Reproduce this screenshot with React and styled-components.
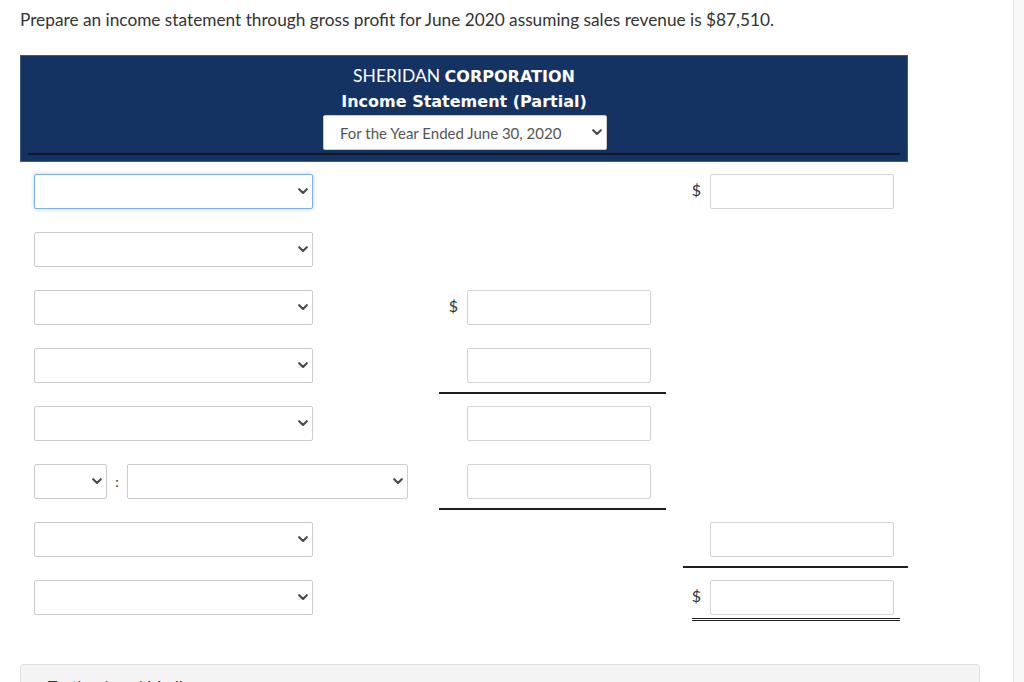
import React from "react";
import styled, { createGlobalStyle } from "styled-components";

const GlobalStyle = createGlobalStyle`
  html, body {
    margin: 0;
    padding: 0;
    background: #ffffff;
  }
  body {
    font-family: Lato, "Open Sans", "Liberation Sans", sans-serif;
    color: #333333;
  }
`;

const Chevron = () => (
  <ChevronIcon viewBox="0 0 10 7" width="10" height="7" aria-hidden="true">
    <path d="M1.2 1.2 L5 5 L8.8 1.2" fill="none" stroke="#4a4a4a" strokeWidth="2.1" strokeLinecap="round" strokeLinejoin="round" />
  </ChevronIcon>
);

const Dropdown = ({ width, focused, large, children }) => (
  <SelectWrap $width={width}>
    <NativeSelect $focused={focused} $large={large} defaultValue="">
      <option value="">{children}</option>
    </NativeSelect>
    <Chevron />
  </SelectWrap>
);

const Amount = ({ dollar }) => (
  <Field>
    {dollar && <Dollar>$</Dollar>}
    <AmountInput type="text" />
  </Field>
);

const rows = [
  { left: "select", focused: true, right: { dollar: true } },
  { left: "select" },
  { left: "select", mid: { dollar: true } },
  { left: "select", mid: {}, midRule: true },
  { left: "select", mid: {} },
  { left: "ratio", mid: {}, midRule: true },
  { left: "select", right: {}, rightRule: true },
  { left: "select", right: { dollar: true }, rightDouble: true },
];

const App = () => {
  return (
    <>
      <GlobalStyle />
      <Page>
        <Main>
          <Prompt>
            Prepare an income statement through gross profit for June 2020 assuming sales revenue is $87,510.
          </Prompt>
          <Sheet>
            <Header>
              <HeaderLine>
                SHERIDAN <Strong>CORPORATION</Strong>
              </HeaderLine>
              <HeaderLine>
                <Strong>Income Statement (Partial)</Strong>
              </HeaderLine>
              <HeaderSelect>
                <Dropdown width={284} large>For the Year Ended June 30, 2020</Dropdown>
              </HeaderSelect>
              <HeaderRule />
            </Header>
            {rows.map((row, i) => (
              <Row key={i}>
                <LeftCell>
                  {row.left === "ratio" ? (
                    <>
                      <Dropdown width={73} />
                      <Colon>:</Colon>
                      <Dropdown width={281} />
                    </>
                  ) : (
                    <Dropdown width={279} focused={row.focused} />
                  )}
                </LeftCell>
                <MidCell $rule={row.midRule}>
                  {row.mid && <Amount dollar={row.mid.dollar} />}
                </MidCell>
                <Spacer />
                <RightCell $rule={row.rightRule}>
                  {row.right && <Amount dollar={row.right.dollar} />}
                  {row.rightDouble && <DoubleRule />}
                </RightCell>
              </Row>
            ))}
          </Sheet>
          <Panel>
            <PanelTitle>Textbook and Media</PanelTitle>
          </Panel>
        </Main>
        <Aside />
      </Page>
    </>
  );
};

export default App;

const Page = styled.div`
  display: flex;
  height: 682px;
  overflow: hidden;
`;

const Main = styled.main`
  width: 1013px;
  flex: none;
  padding: 10px 0 0 20px;
  box-sizing: border-box;
`;

const Aside = styled.aside`
  flex: 1;
  border-left: 1px solid #e2e2e2;
  background: #f8f8f8;
`;

const Prompt = styled.p`
  margin: 0;
  font-size: 17.25px;
  line-height: 20px;
  color: #333333;
`;

const Sheet = styled.section`
  width: 888px;
  margin-top: 25px;
`;

const Header = styled.div`
  background: #153362;
  border: 1px solid #3d5a85;
  box-sizing: border-box;
  height: 107px;
  padding-top: 8px;
  text-align: center;
  color: #ffffff;
`;

const HeaderLine = styled.div`
  font-size: 17.5px;
  line-height: 24px;
`;

const Strong = styled.span`
  font-family: "DejaVu Sans", Verdana, sans-serif;
  font-weight: bold;
  font-size: 16px;
`;

const HeaderSelect = styled.div`
  display: flex;
  justify-content: center;
  margin-top: 1px;
  padding-left: 2px;
`;

const HeaderRule = styled.div`
  height: 2px;
  background: #111827;
  margin: 3px 7px 0 7px;
`;

const SelectWrap = styled.div`
  position: relative;
  width: ${(p) => p.$width}px;
  height: 35px;
  flex: none;
`;

const NativeSelect = styled.select`
  appearance: none;
  -webkit-appearance: none;
  width: 100%;
  height: 100%;
  box-sizing: border-box;
  margin: 0;
  padding: 0 24px 0 16px;
  background: #ffffff;
  border: 1px solid ${(p) => (p.$focused ? "#7fb0e6" : "#cccccc")};
  border-radius: 2px;
  box-shadow: ${(p) => (p.$focused ? "0 0 4px rgba(80, 150, 230, 0.45)" : "none")};
  font-family: Lato, "Open Sans", "Liberation Sans", sans-serif;
  font-size: ${(p) => (p.$large ? 15 : 14)}px;
  color: #555555;
  outline: none;
`;

const ChevronIcon = styled.svg`
  position: absolute;
  right: 5px;
  top: 14px;
  pointer-events: none;
`;

const Row = styled.div`
  display: grid;
  grid-template-columns: 419px 227px 17px 225px;
  height: 58px;
`;

const LeftCell = styled.div`
  display: flex;
  align-items: flex-start;
  padding: 12px 0 0 14px;
`;

const Colon = styled.span`
  width: 20px;
  text-align: center;
  font-size: 14px;
  line-height: 35px;
  color: #333333;
`;

const MidCell = styled.div`
  display: flex;
  flex-direction: column;
  align-items: flex-end;
  padding: 12px 15px 0 0;
  box-sizing: border-box;
  border-bottom: 2px solid ${(p) => (p.$rule ? "#1f1f1f" : "transparent")};
`;

const Spacer = styled.div``;

const RightCell = styled(MidCell)`
  padding-right: 14px;
`;

const Field = styled.div`
  display: flex;
  align-items: flex-start;
`;

const Dollar = styled.span`
  font-size: 16px;
  line-height: 32px;
  color: #333333;
  margin-right: 9px;
`;

const AmountInput = styled.input`
  width: 184px;
  height: 35px;
  box-sizing: border-box;
  margin: 0;
  border: 1px solid #d3d3d3;
  border-radius: 2px;
  background: #ffffff;
  outline: none;
`;

const DoubleRule = styled.div`
  align-self: stretch;
  height: 1px;
  margin: 3px -6px 0 9px;
  border-top: 1px solid #222222;
  border-bottom: 1px solid #222222;
`;

const Panel = styled.div`
  width: 960px;
  margin-top: 38px;
  box-sizing: border-box;
  padding: 9px 27px;
  background: #f4f4f4;
  border: 1px solid #dedede;
  border-radius: 3px;
  height: 80px;
`;

const PanelTitle = styled.div`
  font-size: 16px;
  line-height: 24px;
  color: #333333;
`;
